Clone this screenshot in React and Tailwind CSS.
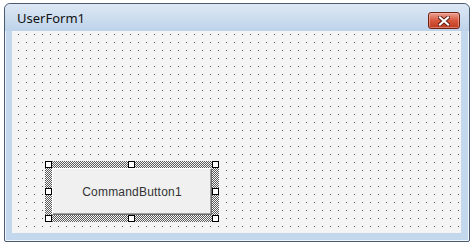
const DOTS =
  "bg-[#f4f4f4] bg-[conic-gradient(at_1px_1px,transparent_75%,#5a5a5a_0)] bg-[length:8px_8px] bg-[position:6px_3px]";

function Handle({ className }) {
  return <span className={`absolute w-[7px] h-[7px] bg-white border border-black ${className}`} />;
}

function CloseButton() {
  return (
    <div className="w-[32px] h-[17px] rounded-[3px] border border-[#6e2215] bg-gradient-to-b from-[#eaa090] via-[#d8583e] to-[#bd3a1f] shadow-[inset_0_0_0_1px_rgba(255,200,190,0.45)] flex items-center justify-center">
      <svg width="12" height="10" viewBox="0 0 12 10">
        <path d="M2 1.5 L10 8.5 M10 1.5 L2 8.5" stroke="#5a1a10" strokeWidth="4" strokeLinecap="square" />
        <path d="M2 1.5 L10 8.5 M10 1.5 L2 8.5" stroke="#ffffff" strokeWidth="2.2" strokeLinecap="square" />
      </svg>
    </div>
  );
}

export default function App() {
  return (
    <div className="w-[474px] h-[245px] bg-white pl-[4px] pt-[3px] font-['Noto_Sans',sans-serif]">
      <div className="w-[466px] h-[239px] rounded-t-[6px] rounded-b-[2px] border border-[#4b5c72] bg-[#c3d7ed] shadow-[inset_0_0_0_1px_rgba(255,255,255,0.75)] flex flex-col">
        <div className="h-[27px] shrink-0 flex items-start justify-between pl-[12px] pr-[9px] rounded-t-[6px] bg-gradient-to-b from-[#dde8f4] to-[#bdd3ea]">
          <span className="mt-[5px] text-[13px] leading-[18px] text-[#111]">UserForm1</span>
          <div className="mt-[8px]">
            <CloseButton />
          </div>
        </div>
        <div className={`ml-[7px] w-[449px] h-[202px] pl-[33px] pt-[130px] ${DOTS}`}>
          <div className="relative w-[174px] h-[61px] p-[7px] bg-[repeating-conic-gradient(#5c5c5c_0_25%,#f4f4f4_0_50%)] bg-[length:2px_2px]">
            <div className="w-full h-full bg-[#f0f0f0] border-t border-l border-t-white border-l-white border-r border-b border-r-[#6d6d6d] border-b-[#6d6d6d] shadow-[inset_-1px_-1px_0_#a0a0a0] flex items-center justify-center">
              <span className="text-[12px] text-[#333] font-['Liberation_Sans',sans-serif] tracking-[0.2px]">CommandButton1</span>
            </div>
            <Handle className="left-0 top-0" />
            <Handle className="left-[83px] top-0" />
            <Handle className="right-0 top-0" />
            <Handle className="left-0 top-[27px]" />
            <Handle className="right-0 top-[27px]" />
            <Handle className="left-0 bottom-0" />
            <Handle className="left-[83px] bottom-0" />
            <Handle className="right-0 bottom-0" />
          </div>
        </div>
      </div>
    </div>
  );
}
